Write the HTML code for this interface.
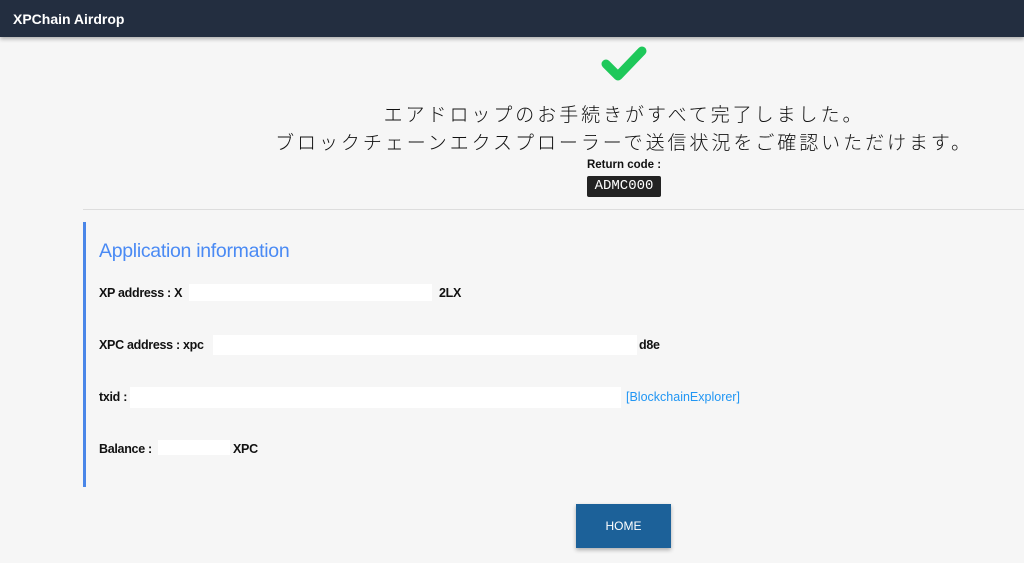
<!DOCTYPE html>
<html><head><meta charset="utf-8"><style>
body{margin:0;width:1024px;height:563px;background:#f6f6f6;font-family:"Liberation Sans",sans-serif;position:relative;overflow:hidden}
.a{position:absolute}
.hdr{left:0;top:0;width:1024px;height:37px;background:#232e40;box-shadow:0 2px 4px rgba(0,0,0,.3)}
.t{font-weight:bold;font-size:12.5px;letter-spacing:-0.3px;color:#111;white-space:nowrap}
.w{background:#fff}
</style></head><body>
<div class="a hdr"></div>
<div class="a" style="left:13px;top:11px;color:#fff;font-weight:bold;font-size:14px">XPChain Airdrop</div>
<svg class="a" style="left:600px;top:45px" width="48" height="38" viewBox="0 0 48 38"><path d="M6 19 L18 31 L42 6" stroke="#1ec85a" stroke-width="9" fill="none" stroke-linecap="round" stroke-linejoin="round"/></svg>
<div class="a" style="left:0;width:1248px;top:102px;text-align:center;font-family:'Liberation Sans','Noto Sans CJK JP',sans-serif;font-weight:300;font-size:19px;letter-spacing:2.95px;line-height:28px;color:#111;white-space:nowrap">エアドロップのお手続きがすべて完了しました。<br>ブロックチェーンエクスプローラーで送信状況をご確認いただけます。</div>
<div class="a" style="left:574px;width:100px;top:159px;text-align:center;font-weight:bold;font-size:11.5px;color:#111">Return code :</div>
<div class="a" style="left:587px;top:176px;width:74px;height:21px;background:#232323;border-radius:2px;color:#fff;font-family:'Liberation Mono',monospace;font-size:14px;line-height:21px;text-align:center">ADMC000</div>
<div class="a" style="left:83px;top:209px;width:941px;height:1px;background:#ddd"></div>
<div class="a" style="left:83px;top:222px;width:3px;height:265px;background:#4a86e8"></div>
<div class="a" style="left:99px;top:240px;font-size:19.5px;color:#4a8af4;letter-spacing:-0.3px">Application information</div>
<div class="a t" style="left:99px;top:286px">XP address : X</div>
<div class="a w" style="left:189px;top:284px;width:243px;height:17px"></div>
<div class="a t" style="left:439px;top:286px">2LX</div>
<div class="a t" style="left:99px;top:338px">XPC address : xpc</div>
<div class="a w" style="left:213px;top:335px;width:424px;height:20px"></div>
<div class="a t" style="left:639px;top:338px">d8e</div>
<div class="a t" style="left:99px;top:390px">txid :</div>
<div class="a w" style="left:130px;top:387px;width:491px;height:21px"></div>
<div class="a" style="left:626px;top:390px;font-size:12.5px;letter-spacing:0px;color:#2196f3">[BlockchainExplorer]</div>
<div class="a t" style="left:99px;top:442px">Balance :</div>
<div class="a w" style="left:158px;top:440px;width:72px;height:15px"></div>
<div class="a t" style="left:233px;top:442px">XPC</div>
<div class="a" style="left:576px;top:504px;width:95px;height:44px;background:#1c6199;box-shadow:0 2px 4px rgba(0,0,0,.3);color:#fff;font-size:12px;line-height:44px;text-align:center">HOME</div>
</body></html>
